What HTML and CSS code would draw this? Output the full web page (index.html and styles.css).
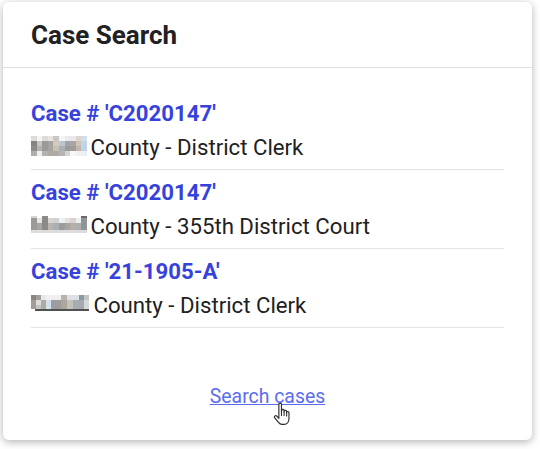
FILE: index.html
```html
<!DOCTYPE html>
<html lang="en">
<head>
<meta charset="utf-8">
<title>Case Search</title>
<link rel="stylesheet" href="styles.css">
</head>
<body>
<main class="card">
  <header class="card-head"><h1>Case Search</h1></header>
  <ul class="results">
    <li>
      <a class="case" href="#">Case # 'C2020147'</a>
      <p class="court"><svg class="redact" width="56" height="20" viewBox="0 0 56 20" shape-rendering="crispEdges">
        <rect x="0" width="5.600" height="5" fill="#dddcdb"/><rect x="5.600" width="5.600" height="5" fill="#f6f5f4"/><rect x="11.200" width="5.600" height="5" fill="#dddcdb"/><rect x="16.800" width="5.600" height="5" fill="#e8e5e0"/><rect x="22.400" width="5.600" height="5" fill="#c5c7ca"/><rect x="28" width="5.600" height="5" fill="#f5f5f5"/><rect x="33.600" width="5.600" height="5" fill="#eaeaea"/><rect x="39.200" width="5.600" height="5" fill="#e8e8ee"/><rect x="44.800" width="5.600" height="5" fill="#dcd5cc"/><rect x="50.400" width="5.600" height="5" fill="#d0dfee"/>
        <rect x="0" y="5" width="5.600" height="5" fill="#8a837d"/><rect x="5.600" y="5" width="5.600" height="5" fill="#c8c6c4"/><rect x="11.200" y="5" width="5.600" height="5" fill="#9c9a98"/><rect x="16.800" y="5" width="5.600" height="5" fill="#a6a4a2"/><rect x="22.400" y="5" width="5.600" height="5" fill="#d5c9bc"/><rect x="28" y="5" width="5.600" height="5" fill="#b8c5d2"/><rect x="33.600" y="5" width="5.600" height="5" fill="#a3a3a3"/><rect x="39.200" y="5" width="5.600" height="5" fill="#a8a6a4"/><rect x="44.800" y="5" width="5.600" height="5" fill="#d0c5b8"/><rect x="50.400" y="5" width="5.600" height="5" fill="#c0d4e8"/>
        <rect x="0" y="10" width="5.600" height="5" fill="#8d8a88"/><rect x="5.600" y="10" width="5.600" height="5" fill="#b4b2b0"/><rect x="11.200" y="10" width="5.600" height="5" fill="#9c9a98"/><rect x="16.800" y="10" width="5.600" height="5" fill="#a8a49e"/><rect x="22.400" y="10" width="5.600" height="5" fill="#c8c0b5"/><rect x="28" y="10" width="5.600" height="5" fill="#aab0b8"/><rect x="33.600" y="10" width="5.600" height="5" fill="#9c9a98"/><rect x="39.200" y="10" width="5.600" height="5" fill="#a09c98"/><rect x="44.800" y="10" width="5.600" height="5" fill="#c0b8ae"/><rect x="50.400" y="10" width="5.600" height="5" fill="#c0d4e8"/>
        <rect x="0" y="15" width="5.600" height="5" fill="#b0aeac"/><rect x="5.600" y="15" width="5.600" height="5" fill="#f0efee"/><rect x="11.200" y="15" width="5.600" height="5" fill="#b4b2ae"/><rect x="16.800" y="15" width="5.600" height="5" fill="#b0aaa4"/><rect x="22.400" y="15" width="5.600" height="5" fill="#aeaaa6"/><rect x="28" y="15" width="5.600" height="5" fill="#b5b5b8"/><rect x="33.600" y="15" width="5.600" height="5" fill="#d4d4d4"/><rect x="39.200" y="15" width="5.600" height="5" fill="#f7f7f7"/><rect x="44.800" y="15" width="5.600" height="5" fill="#f0f0f0"/><rect x="50.400" y="15" width="5.600" height="5" fill="#e8f0f6"/>
      </svg> County - District Clerk</p>
    </li>
    <li>
      <a class="case" href="#">Case # 'C2020147'</a>
      <p class="court"><svg class="redact" width="56" height="20" viewBox="0 2 56 20" shape-rendering="crispEdges">
        <rect x="0" y="3" width="5.600" height="2" fill="#d8d4d0"/><rect x="11.200" y="3" width="5.600" height="2" fill="#8f8a88"/><rect x="50.400" y="3" width="5.600" height="2" fill="#6f6a68"/>
        <rect x="0" y="5" width="5.600" height="12" fill="#9c9a98"/><rect x="5.600" y="5" width="5.600" height="5" fill="#e8e6e4"/><rect x="5.600" y="10" width="5.600" height="7" fill="#a8a6a4"/><rect x="11.200" y="5" width="5.600" height="12" fill="#8c8a88"/><rect x="16.800" y="5" width="5.600" height="5" fill="#d8d6d4"/><rect x="16.800" y="10" width="5.600" height="7" fill="#bab4ae"/><rect x="22.400" y="5" width="5.600" height="5" fill="#ccd2d6"/><rect x="22.400" y="10" width="5.600" height="7" fill="#a8b0b4"/><rect x="28" y="5" width="5.600" height="5" fill="#f0f0f0"/><rect x="28" y="10" width="5.600" height="7" fill="#9c9c9c"/><rect x="33.600" y="5" width="5.600" height="5" fill="#e4e2e0"/><rect x="33.600" y="10" width="5.600" height="7" fill="#a8a4a0"/><rect x="39.200" y="5" width="5.600" height="5" fill="#d8d4d0"/><rect x="39.200" y="10" width="5.600" height="7" fill="#b8aea6"/><rect x="44.800" y="5" width="5.600" height="5" fill="#eeeeee"/><rect x="44.800" y="10" width="5.600" height="7" fill="#aab0b2"/><rect x="50.400" y="5" width="5.600" height="12" fill="#8f9496"/>
        <rect x="0" y="17" width="56" height="3" fill="#dcdcdc"/>
      </svg> County - 355th District Court</p>
    </li>
    <li>
      <a class="case" href="#">Case # '21-1905-A'</a>
      <p class="court"><svg class="redact" width="59" height="20" viewBox="0 2 59 20" shape-rendering="crispEdges">
        <rect x="0" y="3" width="58" height="14" fill="#c6c4c2"/><rect x="0" y="3" width="5" height="5" fill="#8a8683"/><rect x="5" y="3" width="5" height="5" fill="#a39f9b"/><rect x="10" y="3" width="5" height="5" fill="#e6e8e8"/><rect x="15" y="3" width="15" height="5" fill="#f0f0f0"/><rect x="30" y="3" width="6" height="5" fill="#b8b2ac"/><rect x="36" y="3" width="12" height="5" fill="#dce0e4"/><rect x="48" y="3" width="5" height="5" fill="#8a98a4"/>
        <rect x="0" y="8" width="5" height="9" fill="#a09c98"/><rect x="5" y="8" width="5" height="5" fill="#e0dedc"/><rect x="10" y="8" width="5" height="9" fill="#aeaaa4"/><rect x="15" y="8" width="5" height="9" fill="#d4e2f0"/><rect x="20" y="8" width="10" height="9" fill="#9e9c9c"/><rect x="30" y="8" width="6" height="9" fill="#aca69e"/><rect x="36" y="8" width="6" height="9" fill="#c2c2b8"/><rect x="42" y="8" width="6" height="9" fill="#a8acb0"/><rect x="48" y="8" width="5" height="9" fill="#a4aab2"/><rect x="53" y="8" width="5" height="9" fill="#d8d8d8"/>
        <rect x="4" y="17" width="54" height="2" fill="#50504e"/>
      </svg> County - District Clerk</p>
    </li>
  </ul>
  <footer class="card-foot">
    <a class="search-link" href="#">Search cases</a>
    <svg class="cursor" width="19" height="25" viewBox="0 0 18 24"><path d="M5.500 2.200c0-1.500 2.500-1.500 2.500 0v7.300l.3-1.600c.3-1.200 2.200-1 2.200.3v1.400l.3-1c.4-1 2.100-.8 2.100.5v1l.3-.5c.5-.8 2-.4 2 .8v5.600c0 3-1.700 5.500-4.700 5.500H8.500c-1.700 0-2.500-.8-3.300-2L1.400 15c-.8-1.400 1-2.600 2.100-1.500l2 2.200z" fill="#fff" stroke="#2b2b2b" stroke-width="1.100" stroke-linejoin="round"/><path d="M8 9.500v4M10.500 9.500v4M13 10.500v3.500" stroke="#2b2b2b" stroke-width="1" fill="none"/></svg>
  </footer>
</main>
</body>
</html>
```

FILE: styles.css
```css
* { box-sizing: border-box; }
html, body { margin: 0; height: 100%; }
body {
  padding: 2px 8px 9px 3px;
  background: #fff;
  font-family: Roboto, "Liberation Sans", sans-serif;
  color: #212121;
  overflow: hidden;
}
.card {
  height: 438px;
  background: #fff;
  border-radius: 6px;
  box-shadow: 0 2px 8px rgba(0, 0, 0, .3);
  display: flex;
  flex-direction: column;
}
.card-head {
  height: 66px;
  padding: 0 28px;
  border-bottom: 1px solid #e0e0e0;
  display: flex;
  align-items: center;
}
.card-head h1 {
  margin: 0;
  font-size: 26px;
  font-weight: 700;
  line-height: 32px;
}
.results {
  list-style: none;
  margin: 0;
  padding: 23px 28px 0;
}
.results li {
  height: 79px;
  padding-top: 8px;
  border-bottom: 1px solid #e4e4e4;
}
.case {
  display: block;
  font-size: 22.200px;
  font-weight: 700;
  line-height: 28px;
  color: #3742dc;
  text-decoration: none;
}
.court {
  margin: 6px 0 0;
  font-size: 22.200px;
  line-height: 28px;
  white-space: nowrap;
}
.redact {
  vertical-align: -1px;
  margin-right: -2px;
}
.card-foot {
  flex: 1;
  position: relative;
  display: flex;
  justify-content: center;
  padding-top: 56px;
}
.search-link {
  font-size: 19.400px;
  line-height: 26px;
  height: 26px;
  color: #5b6cf0;
  text-decoration: underline;
}
.cursor {
  position: absolute;
  left: 270px;
  top: 74px;
}
```
